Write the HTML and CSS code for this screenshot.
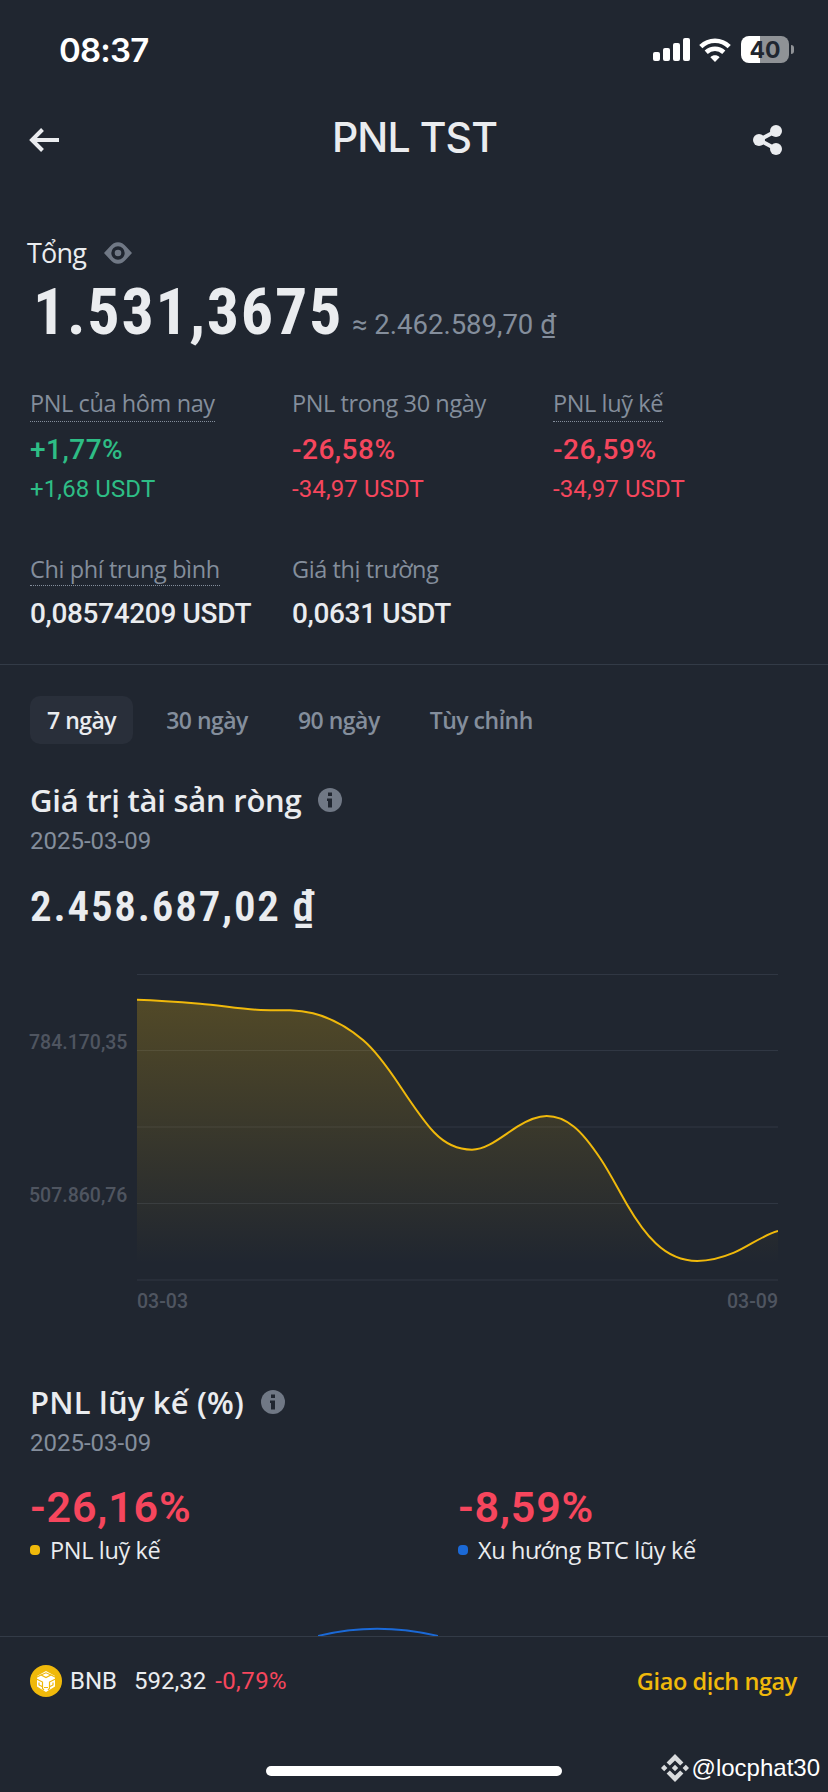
FILE: index.html
```html
<!DOCTYPE html>
<html lang="vi">
<head>
    <meta charset="UTF-8">
    <meta name="viewport" content="width=device-width, initial-scale=1.0">
    <title>PNL TST</title>
    <link rel="stylesheet" href="styles.css">
</head>
<body>
    <div class="screen">
        <!-- Status bar -->
        <div class="status-bar">
            <span class="time">08:37</span>
            <div class="status-icons">
                <svg class="signal" width="37" height="23" viewBox="0 0 37 23" fill="#fff">
                    <rect x="0" y="14" width="7" height="9" rx="2"/>
                    <rect x="10" y="10" width="7" height="13" rx="2"/>
                    <rect x="20" y="5" width="7" height="18" rx="2"/>
                    <rect x="30" y="0" width="7" height="23" rx="2"/>
                </svg>
                <svg class="wifi" width="32" height="24" viewBox="0 0 32 24" fill="none" stroke="#fff" stroke-width="4.6">
                    <path d="M1.8 8.6C9.8 .8 22.2 .8 30.2 8.6"/>
                    <path d="M7.2 14.2C12.2 9.6 19.8 9.6 24.8 14.2"/>
                    <path d="M16 24L11.4 19.2C14 16.7 18 16.7 20.6 19.2Z" fill="#fff" stroke="none"/>
                </svg>
                <div class="battery">40</div>
                <span class="battery-tip"></span>
            </div>
        </div>

        <!-- Header -->
        <div class="header">
            <svg width="30" height="24" viewBox="0 0 30 24" fill="none" stroke="#eaecef" stroke-width="4">
                <path d="M30 12H4M13.5 1.5L3 12L13.5 22.5"/>
            </svg>
            <h1>PNL TST</h1>
            <svg width="30" height="30" viewBox="0 0 30 30" fill="#eaecef">
                <path d="M6 15L23 6M6 15L23 24" stroke="#eaecef" stroke-width="4"/>
                <circle cx="6" cy="15" r="6"/>
                <circle cx="23" cy="6" r="6"/>
                <circle cx="23" cy="24" r="6"/>
            </svg>
        </div>

        <!-- Total and PNL stats -->
        <div class="summary">
            <div class="total-label">
                <span>Tổng</span>
                <svg width="28" height="22" viewBox="0 0 28 22">
                    <path d="M0 11L6 4.5C10.5-1.2 17.5-1.2 22 4.5L28 11L22 17.5C17.5 23.2 10.5 23.2 6 17.5Z" fill="#707885"/>
                    <circle cx="14" cy="11" r="5" fill="none" stroke="#202630" stroke-width="3.4"/>
                </svg>
            </div>
            <div class="total-row">
                <span class="total">1.531,3675</span>
                <span class="approx">≈ 2.462.589,70 ₫</span>
            </div>
            <div class="stats">
                <div class="stat">
                    <span class="label dotted">PNL của hôm nay</span>
                    <span class="value green">+1,77%</span>
                    <span class="sub green">+1,68 USDT</span>
                </div>
                <div class="stat">
                    <span class="label">PNL trong 30 ngày</span>
                    <span class="value red">-26,58%</span>
                    <span class="sub red">-34,97 USDT</span>
                </div>
                <div class="stat">
                    <span class="label dotted">PNL luỹ kế</span>
                    <span class="value red">-26,59%</span>
                    <span class="sub red">-34,97 USDT</span>
                </div>
            </div>
            <div class="stats prices">
                <div class="stat">
                    <span class="label dotted">Chi phí trung bình</span>
                    <span class="value">0,08574209 USDT</span>
                </div>
                <div class="stat">
                    <span class="label">Giá thị trường</span>
                    <span class="value">0,0631 USDT</span>
                </div>
            </div>
        </div>

        <!-- Period tabs -->
        <div class="tabs">
            <span class="tab active">7 ngày</span>
            <span class="tab">30 ngày</span>
            <span class="tab">90 ngày</span>
            <span class="tab">Tùy chỉnh</span>
        </div>

        <!-- Net asset value -->
        <div class="section">
            <h2>
                <span>Giá trị tài sản ròng</span>
                <svg width="24" height="24" viewBox="0 0 24 24">
                    <circle cx="12" cy="12" r="12" fill="#707885"/>
                    <path d="M10 4.5h4v3.5h-4zM9 10.5H14v9h-4v-6.5H9z" fill="#202630"/>
                </svg>
            </h2>
            <div class="date">2025-03-09</div>
            <div class="amount">2.458.687,02 ₫</div>
        </div>

        <div class="chart">
            <div class="y-axis">
                <span>784.170,35</span>
                <span>507.860,76</span>
            </div>
            <div class="plot">
                <svg width="641" height="307" viewBox="0 0 641 307">
                    <defs>
                        <linearGradient id="area" x1="0" y1="25" x2="0" y2="290" gradientUnits="userSpaceOnUse">
                            <stop offset="0" stop-color="#f0b90b" stop-opacity="0.24"/>
                            <stop offset="1" stop-color="#f0b90b" stop-opacity="0"/>
                        </linearGradient>
                    </defs>
                    <path d="M0 .5H641M0 76.5H641M0 153H641M0 229.5H641M0 306H641" stroke="#303743"/>
                    <path fill="url(#area)" d="M0 25.7C21 26.5 42 28 63 29.7C81.9 31.2 100.8 34.6 119.7 35.7C130.8 36.4 141.9 36 153 36.3C160.7 36.5 168.3 37.4 176 39.3C192.8 43.5 209.5 52 226.3 66.3C238.5 76.7 250.8 93.7 263 112C274.3 129 285.7 146.4 297 158.3C309.7 171.6 322.3 175.7 335 175.7C350.1 175.7 365.2 162.2 380.3 152.7C390.1 146.5 399.9 142 409.7 142C418.8 142 427.9 145.4 437 152.7C445.9 159.8 454.8 171.7 463.7 185C472.6 198.4 481.4 215.7 490.3 231C499.8 247.3 509.2 260.3 518.7 269.3C532.6 282.5 546.4 287 560.3 287C572.5 287 584.8 283.8 597 278.7C611.7 272.5 626 261 641 257V306H0Z"/>
                    <path fill="none" stroke="#f0b90b" stroke-width="2" d="M0 25.7C21 26.5 42 28 63 29.7C81.9 31.2 100.8 34.6 119.7 35.7C130.8 36.4 141.9 36 153 36.3C160.7 36.5 168.3 37.4 176 39.3C192.8 43.5 209.5 52 226.3 66.3C238.5 76.7 250.8 93.7 263 112C274.3 129 285.7 146.4 297 158.3C309.7 171.6 322.3 175.7 335 175.7C350.1 175.7 365.2 162.2 380.3 152.7C390.1 146.5 399.9 142 409.7 142C418.8 142 427.9 145.4 437 152.7C445.9 159.8 454.8 171.7 463.7 185C472.6 198.4 481.4 215.7 490.3 231C499.8 247.3 509.2 260.3 518.7 269.3C532.6 282.5 546.4 287 560.3 287C572.5 287 584.8 283.8 597 278.7C611.7 272.5 626 261 641 257"/>
                </svg>
                <div class="x-axis">
                    <span>03-03</span>
                    <span>03-09</span>
                </div>
            </div>
        </div>

        <!-- Cumulative PNL -->
        <div class="section cumulative">
            <h2>
                <span>PNL lũy kế (%)</span>
                <svg width="24" height="24" viewBox="0 0 24 24">
                    <circle cx="12" cy="12" r="12" fill="#707885"/>
                    <path d="M10 4.5h4v3.5h-4zM9 10.5H14v9h-4v-6.5H9z" fill="#202630"/>
                </svg>
            </h2>
            <div class="date">2025-03-09</div>
            <div class="compare">
                <div>
                    <div class="percent">-26,16%</div>
                    <div class="legend"><i class="dot yellow"></i>PNL luỹ kế</div>
                </div>
                <div>
                    <div class="percent">-8,59%</div>
                    <div class="legend"><i class="dot blue"></i>Xu hướng BTC lũy kế</div>
                </div>
            </div>
            <svg class="arc" width="120" height="10" viewBox="0 0 120 10" fill="none" stroke="#1b69d6" stroke-width="2">
                <path d="M0 10C38 .5 80 .5 120 10"/>
            </svg>
        </div>

        <!-- Bottom ticker -->
        <div class="footer">
            <div class="ticker">
                <svg width="32" height="32" viewBox="0 0 32 32">
                    <circle cx="16" cy="16" r="16" fill="#f0b90b"/>
                    <path d="M16 6L25 11V21.5L16 27L7 21.5V11Z" fill="#fff"/>
                    <path d="M6 12.5L11 10L16 12.5L21 10L26 12.5M11 10L16 7.8L21 10M6.5 14L12.5 17V23.5L14 25M25.5 14L19.5 17V23.5L18 25M9 17.5V20L12 21.5M23 17.5V20L20 21.5M14 22.5H18" fill="none" stroke="#f0b90b" stroke-width="1.2"/>
                </svg>
                <span class="coin">BNB</span>
                <span class="price">592,32</span>
                <span class="change">-0,79%</span>
                <span class="trade">Giao dịch ngay</span>
            </div>
            <div class="home-bar"></div>
        </div>

        <div class="watermark">
            <svg width="28" height="28" viewBox="0 0 28 28" fill="#d9dbdd">
                <path d="M14 0L22.4 8.4L19.2 11.6L14 6.4L8.8 11.6L5.6 8.4Z"/>
                <path d="M14 28L22.4 19.6L19.2 16.4L14 21.6L8.8 16.4L5.6 19.6Z"/>
                <path d="M14 10.8L17.2 14L14 17.2L10.8 14ZM3.2 10.8L6.4 14L3.2 17.2L0 14ZM24.8 10.8L28 14L24.8 17.2L21.6 14Z"/>
            </svg>
            <span>@locphat30</span>
        </div>
    </div>
</body>
</html>
```
FILE: styles.css
```css
body {
    margin: 0;
    background-color: #202630;
    color: #eaecef;
    font-family: "Open Sans", sans-serif;
}

.screen {
    position: relative;
    width: 828px;
    height: 1792px;
    overflow: hidden;
    white-space: nowrap;
}

svg {
    display: block;
    flex: none;
}

.total-row, .value, .sub, .date, .amount, .percent, .chart, .ticker {
    font-family: Roboto, sans-serif;
}

/* Status bar */
.status-bar {
    display: flex;
    justify-content: space-between;
    align-items: center;
    height: 99px;
    padding: 0 34px 0 59px;
    color: #fff;
    font-family: Inter, sans-serif;
}

.time {
    font-size: 33px;
    font-weight: 600;
    letter-spacing: -0.8px;
}

.status-icons {
    display: flex;
    align-items: center;
}

.wifi {
    margin: 0 10px 0 9px;
}

.battery {
    width: 48px;
    height: 27px;
    border-radius: 8px;
    background: linear-gradient(90deg, #fff 40%, #8f9296 40%);
    color: #202630;
    font-size: 23px;
    font-weight: 700;
    line-height: 28px;
    text-align: center;
}

.battery-tip {
    width: 3px;
    height: 9px;
    margin-left: 2px;
    border-radius: 0 4px 4px 0;
    background-color: #8f9296;
}

/* Header */
.header {
    display: grid;
    grid-template-columns: 30px 1fr 30px;
    align-items: center;
    height: 82px;
    padding: 0 45px 0 29px;
}

.header h1 {
    margin: 0;
    padding: 0 0 6px 17px;
    font-family: Inter, sans-serif;
    font-size: 41px;
    font-weight: 500;
    line-height: 50px;
    letter-spacing: -0.9px;
    text-align: center;
}

/* Summary */
.summary {
    padding: 53px 30px 30px;
    border-bottom: 1px solid #333b47;
}

.total-label {
    display: flex;
    align-items: center;
    gap: 18px;
    height: 37px;
    margin-left: -3px;
    font-size: 27px;
    letter-spacing: -0.8px;
}

.total-row {
    display: flex;
    align-items: baseline;
    margin-top: 2px;
    line-height: 80px;
}

.total {
    margin-left: 3px;
    font-size: 64px;
    font-weight: 700;
    font-stretch: 75%;
    letter-spacing: 1.7px;
}

.approx {
    margin-left: 9px;
    color: #848e9c;
    font-size: 27.5px;
    line-height: 40px;
}

.stats {
    display: grid;
    grid-template-columns: 262px 261px 1fr;
    margin-top: 35px;
}

.stat {
    display: flex;
    flex-direction: column;
    align-items: flex-start;
}

.label {
    box-sizing: border-box;
    height: 34px;
    color: #848e9c;
    font-size: 23.5px;
    letter-spacing: -0.4px;
    line-height: 30px;
}

.dotted {
    border-bottom: 1px dotted #848e9c;
}

.value {
    margin-top: 7px;
    font-size: 28px;
    font-weight: 500;
    letter-spacing: 0.5px;
    line-height: 41px;
}

.sub {
    font-size: 24px;
    letter-spacing: 0.1px;
    line-height: 38px;
}

.prices {
    margin-top: 46px;
}

.prices .label {
    height: 32px;
}

.prices .value {
    letter-spacing: -0.35px;
}

.green {
    color: #2ebd85;
}

.red {
    color: #f6465d;
}

/* Tabs */
.tabs {
    display: flex;
    gap: 16px;
    margin: 31px 0 0 30px;
}

.tab {
    height: 48px;
    padding: 0 17px;
    border-radius: 10px;
    color: #848e9c;
    font-size: 23px;
    font-weight: 600;
    letter-spacing: -0.5px;
    line-height: 48px;
}

.tab.active {
    background-color: #292f3a;
    color: #eaecef;
}

/* Sections */
.section {
    padding: 34px 30px 0;
}

.section h2 {
    display: flex;
    align-items: center;
    gap: 17px;
    height: 44px;
    margin: 0;
    font-size: 31px;
    font-weight: 600;
    letter-spacing: -0.25px;
}

.date {
    color: #848e9c;
    font-size: 24px;
    line-height: 38px;
}

.amount {
    margin-top: 18px;
    font-size: 43px;
    font-weight: 600;
    font-stretch: 75%;
    letter-spacing: 1.8px;
    line-height: 56px;
}

/* Chart */
.chart {
    display: flex;
    padding: 40px 50px 0 29px;
    color: #4f5560;
    font-size: 19.5px;
    font-weight: 500;
    line-height: 24px;
}

.y-axis {
    display: flex;
    flex-direction: column;
    gap: 129px;
    width: 108px;
    padding-top: 57px;
}

.x-axis {
    display: flex;
    justify-content: space-between;
    margin-top: 9px;
}

/* Cumulative PNL */
.cumulative {
    padding-top: 66px;
}

.cumulative h2 {
    letter-spacing: 0.2px;
}

.compare {
    display: grid;
    grid-template-columns: 428px 1fr;
    margin-top: 17px;
}

.percent {
    color: #f6465d;
    font-size: 43px;
    font-weight: 600;
    letter-spacing: 0.8px;
    line-height: 56px;
}

.legend {
    display: flex;
    align-items: center;
    gap: 10px;
    font-size: 23.5px;
    letter-spacing: -0.35px;
    line-height: 30px;
}

.dot {
    width: 10px;
    height: 10px;
    border-radius: 4px;
}

.yellow {
    background-color: #f0b90b;
}

.blue {
    background-color: #1b69d6;
}

.arc {
    margin: 61px 0 0 288px;
}

/* Footer */
.footer {
    border-top: 1px solid #333b47;
}

.ticker {
    display: flex;
    align-items: center;
    height: 87px;
    padding: 0 31px 0 30px;
    font-size: 24px;
}

.coin {
    margin: 0 17px 0 8px;
}

.change {
    margin-left: 9px;
    color: #f6465d;
    letter-spacing: 0.4px;
}

.trade {
    margin-left: auto;
    color: #f0b90b;
    font-family: "Open Sans", sans-serif;
    font-size: 23.5px;
    font-weight: 600;
    letter-spacing: -0.4px;
}

.home-bar {
    width: 296px;
    height: 10px;
    margin: 42px auto 0;
    border-radius: 5px;
    background-color: #fff;
}

.watermark {
    position: absolute;
    right: 8px;
    bottom: 9px;
    display: flex;
    align-items: center;
    gap: 3px;
    color: #fff;
    font-family: "Liberation Sans", sans-serif;
    font-size: 24px;
    line-height: 30px;
}
```
